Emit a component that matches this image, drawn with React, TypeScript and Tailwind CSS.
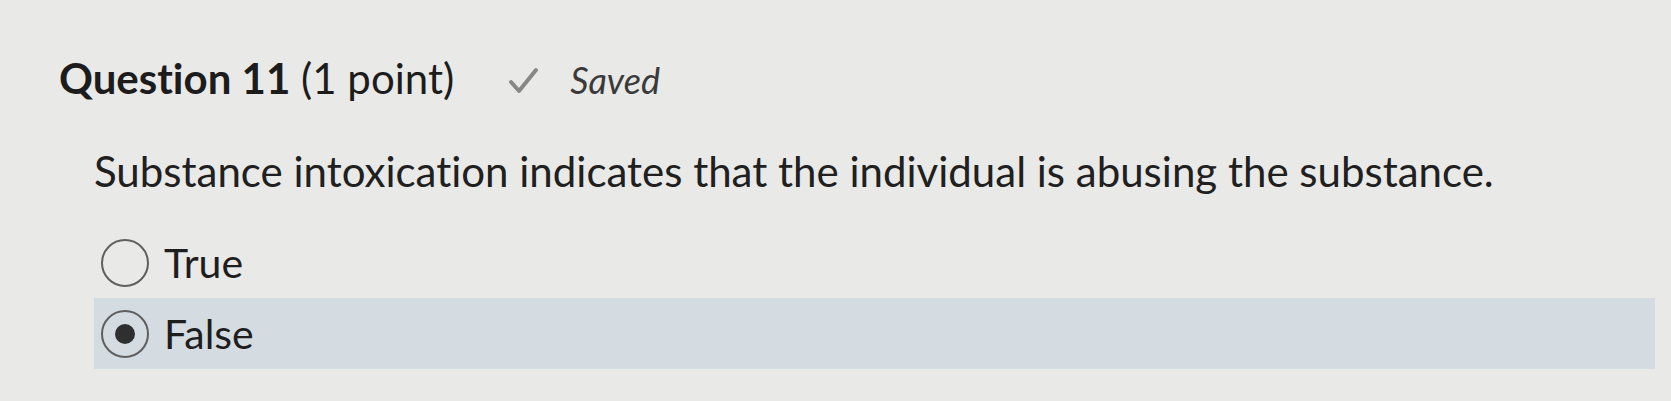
import React from 'react';

const options = [
  { label: 'True', selected: false },
  { label: 'False', selected: true },
];

const CheckMark = () => (
  <svg width="31" height="27" viewBox="0 0 31 27" fill="none" className="shrink-0">
    <path d="M3 15 L11 24 L28 3" stroke="#878787" strokeWidth="4" strokeLinecap="round" strokeLinejoin="round" />
  </svg>
);

const Radio = ({ checked }: { checked: boolean }) => (
  <span className="flex items-center justify-center w-[48px] h-[48px] rounded-full border-2 border-[#5f5f5f] shrink-0">
    {checked && <span className="w-[20px] h-[20px] rounded-full bg-[#2f2f2f]" />}
  </span>
);

export default function App() {
  return (
    <div className="w-[1671px] h-[401px] overflow-hidden bg-[#e9e9e7] font-['Lato','Noto_Sans',sans-serif] [font-variant-ligatures:none] text-[#1c1c1c]">
      {/* Heading */}
      <div className="flex items-baseline pl-[59px] pt-[57px]">
        <h2 className="text-[42px] leading-none">
          <span className="font-bold">Question 11</span> <span>(1 point)</span>
        </h2>
        <span className="ml-[54px] mr-[31px]">
          <CheckMark />
        </span>
        <span className="text-[36px] leading-none italic text-[#3a3a3a]">Saved</span>
      </div>

      {/* Question body */}
      <p className="pl-[94px] mt-[51px] text-[42px] leading-none text-[#202020]">
        Substance intoxication indicates that the individual is abusing the substance.
      </p>

      {/* Answers */}
      <div className="mt-[35px] ml-[94px] w-[1561px] flex flex-col">
        {options.map((opt) => (
          <label
            key={opt.label}
            className={`flex items-center gap-[15px] h-[71px] pl-[7px] ${opt.selected ? 'bg-[#d4dce1]' : ''}`}
          >
            <Radio checked={opt.selected} />
            <span className="text-[41px] leading-none text-[#1e1e1e]">{opt.label}</span>
          </label>
        ))}
      </div>
    </div>
  );
}
